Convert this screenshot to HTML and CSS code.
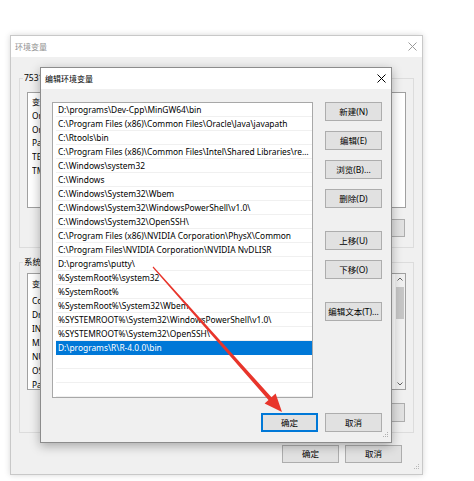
FILE: index.html
```html
<!DOCTYPE html>
<html>
<head>
<meta charset="utf-8">
<link rel="stylesheet" href="styles.css">
</head>
<body>
<div class="desk">
  <div class="win win-back">
    <div class="titlebar">
      <span class="title">环境变量</span>
      <svg class="close" viewBox="0 0 9 9"><path d="M0.5 0.5L8.5 8.5M8.5 0.5L0.5 8.5" stroke="#9a9a9a" stroke-width="1" fill="none"/></svg>
    </div>
    <div class="back-body">
      <fieldset class="group g1">
        <legend><span class="lclip">7531 的用户变量(U)</span></legend>
        <div class="vlist ulist">
          <div class="vtable">
            <div class="vhead"><span class="c1">变量</span></div>
            <div class="vrow"><span class="c1">OneDrive</span></div>
            <div class="vrow"><span class="c1">OneDriveConsumer</span></div>
            <div class="vrow"><span class="c1">Path</span></div>
            <div class="vrow"><span class="c1">TEMP</span></div>
            <div class="vrow"><span class="c1">TMP</span></div>
          </div>
        </div>
        <div class="btnrow">
          <button class="btn wide" aria-label="新建"></button>
          <button class="btn wide" aria-label="编辑"></button>
          <button class="btn wide" aria-label="删除"></button>
        </div>
      </fieldset>
      <fieldset class="group g2">
        <legend><span class="lclip">系统变量(S)</span></legend>
        <div class="vlist slist">
          <div class="vtable">
            <div class="vhead tall"><span class="c1">变量</span></div>
            <div class="vrow s"><span class="c1">ComSpec</span></div>
            <div class="vrow s"><span class="c1">DriverData</span></div>
            <div class="vrow s"><span class="c1">INTEL_DEV_REDIST</span></div>
            <div class="vrow s"><span class="c1">MIC_LD_LIBRARY_PATH</span></div>
            <div class="vrow s"><span class="c1">NUMBER_OF_PROCESSORS</span></div>
            <div class="vrow s"><span class="c1">OS</span></div>
            <div class="vrow s"><span class="c1">Path</span></div>
          </div>
          <div class="vscroll">
            <svg class="chev" viewBox="0 0 10 11"><path d="M2.5 6.5L5 4L7.5 6.5" stroke="#606060" stroke-width="1" fill="none"/></svg>
            <div class="thumb"></div>
            <div class="track"></div>
            <svg class="chev" viewBox="0 0 10 11"><path d="M2.5 4.5L5 7L7.5 4.5" stroke="#606060" stroke-width="1" fill="none"/></svg>
          </div>
        </div>
        <div class="btnrow tallrow">
          <button class="btn wide" aria-label="新建"></button>
          <button class="btn wide" aria-label="编辑"></button>
          <button class="btn wide" aria-label="删除"></button>
        </div>
      </fieldset>
      <div class="footer back-footer">
        <button class="btn b58">确定</button>
        <button class="btn b57">取消</button>
      </div>
    </div>
    <svg class="grip" viewBox="0 0 8 8"><g fill="#b8b8b8"><rect x="6" y="0" width="1" height="1"/><rect x="4" y="2" width="1" height="1"/><rect x="6" y="2" width="1" height="1"/><rect x="2" y="4" width="1" height="1"/><rect x="4" y="4" width="1" height="1"/><rect x="6" y="4" width="1" height="1"/></g></svg>
  </div>

  <div class="win win-front">
    <div class="titlebar">
      <span class="title">编辑环境变量</span>
      <svg class="close" viewBox="0 0 9 9"><path d="M0.5 0.5L8.5 8.5M8.5 0.5L0.5 8.5" stroke="#000" stroke-width="1" fill="none"/></svg>
    </div>
    <div class="front-body">
      <div class="front-main">
        <div class="pathlist">
          <div class="prow">D:\programs\Dev-Cpp\MinGW64\bin</div>
          <div class="prow">C:\Program Files (x86)\Common Files\Oracle\Java\javapath</div>
          <div class="prow">C:\Rtools\bin</div>
          <div class="prow">C:\Program Files (x86)\Common Files\Intel\Shared Libraries\red...</div>
          <div class="prow">C:\Windows\system32</div>
          <div class="prow">C:\Windows</div>
          <div class="prow">C:\Windows\System32\Wbem</div>
          <div class="prow">C:\Windows\System32\WindowsPowerShell\v1.0\</div>
          <div class="prow">C:\Windows\System32\OpenSSH\</div>
          <div class="prow">C:\Program Files (x86)\NVIDIA Corporation\PhysX\Common</div>
          <div class="prow">C:\Program Files\NVIDIA Corporation\NVIDIA NvDLISR</div>
          <div class="prow">D:\programs\putty\</div>
          <div class="prow">%SystemRoot%\system32</div>
          <div class="prow">%SystemRoot%</div>
          <div class="prow">%SystemRoot%\System32\Wbem</div>
          <div class="prow">%SYSTEMROOT%\System32\WindowsPowerShell\v1.0\</div>
          <div class="prow">%SYSTEMROOT%\System32\OpenSSH\</div>
          <div class="prow sel">D:\programs\R\R-4.0.0\bin</div>
          <div class="prow"></div>
          <div class="prow"></div>
          <div class="prow"></div>
        </div>
        <div class="btncol">
          <button class="btn">新建(N)</button>
          <button class="btn">编辑(E)</button>
          <button class="btn">浏览(B)...</button>
          <button class="btn">删除(D)</button>
          <button class="btn sep">上移(U)</button>
          <button class="btn">下移(O)</button>
          <button class="btn sep">编辑文本(T)...</button>
        </div>
      </div>
      <div class="footer front-footer">
        <button class="btn default">确定</button>
        <button class="btn">取消</button>
      </div>
    </div>
    <svg class="grip" viewBox="0 0 8 8"><g fill="#b0b0b0"><rect x="6" y="0" width="1" height="1"/><rect x="4" y="2" width="1" height="1"/><rect x="6" y="2" width="1" height="1"/><rect x="2" y="4" width="1" height="1"/><rect x="4" y="4" width="1" height="1"/><rect x="6" y="4" width="1" height="1"/></g></svg>
  </div>

  <svg class="arrow" viewBox="0 0 474 481">
    <polygon points="153.4,266.5 271.5,397.3 275.6,393.6 282,412 264.6,403.6 268.5,399.9 152.6,267.5" fill="#e8352b"/>
  </svg>
</div>
</body>
</html>
```

FILE: styles.css
```css
* { box-sizing: border-box; }
html, body { margin: 0; padding: 0; background: #ffffff; }
body {
  width: 474px;
  height: 481px;
  overflow: hidden;
  font-family: "Noto Sans", "Noto Sans CJK SC", sans-serif;
  color: #000;
}
.desk { position: relative; width: 474px; height: 481px; }

.win {
  position: absolute;
  display: flex;
  flex-direction: column;
  background: #f0f0f0;
}
.win-back {
  left: 10px;
  top: 35px;
  width: 413px;
  height: 440px;
  border: 1px solid #c8c8c8;
  box-shadow: 0 0 6px rgba(0, 0, 0, 0.16);
}
.win-front {
  left: 40px;
  top: 67px;
  width: 352px;
  border: 1px solid #8c8c8c;
  box-shadow: 0 3px 10px rgba(0, 0, 0, 0.3);
}

.titlebar {
  flex: none;
  height: 21px;
  background: #ffffff;
  display: flex;
  align-items: center;
  justify-content: space-between;
  padding: 0 5px 0 4px;
}
.title {
  font-family: "Noto Sans CJK SC", sans-serif;
  font-size: 8px;
  line-height: 10px;
  color: #000;
}
.win-back .title { color: #8f8f8f; }
.close { width: 9px; height: 9px; display: block; }

.grip { position: absolute; right: 2px; bottom: 2px; width: 8px; height: 8px; }

/* background dialog */
.back-body {
  flex: 1;
  display: flex;
  flex-direction: column;
  padding: 0 8px;
}
.group {
  margin: 0;
  border: 1px solid #dcdcdc;
  min-width: 0;
  padding: 7px 7px 10px 7px;
}
.g1 { margin-top: 14px; }
.g2 { margin-top: 7px; padding-top: 4px; }
.group legend {
  font-family: "Noto Sans", "Noto Sans CJK SC", sans-serif;
  font-size: 8.5px;
  line-height: 14px;
  padding: 0 1px;
  margin-left: -4px;
  color: #000;
}
.lclip {
  display: block;
  width: 17px;
  overflow: hidden;
  white-space: nowrap;
}
.vlist {
  background: #fff;
  border: 1px solid #a0a0a0;
  display: flex;
  overflow: hidden;
}
.ulist { height: 116px; }
.slist { height: 117px; }
.vtable { flex: 1; min-width: 0; }
.vhead, .vrow {
  display: flex;
  white-space: nowrap;
  font-size: 8.4px;
  padding-left: 4px;
  align-items: center;
}
.vhead { height: 16px; font-family: "Noto Sans CJK SC", sans-serif; font-size: 8px; }
.vhead.tall { height: 19px; }
.vrow { height: 13.6px; }
.vrow.s { height: 14px; }
.c1 { width: 18px; flex: none; overflow: hidden; }

.vscroll {
  width: 10px;
  flex: none;
  background: #f0f0f0;
  display: flex;
  flex-direction: column;
  align-items: center;
}
.chev { width: 10px; height: 11px; display: block; flex: none; }
.thumb { width: 8px; height: 32px; background: #c6c6c6; margin-top: 2px; flex: none; }
.track { flex: 1; }

.btnrow {
  display: flex;
  justify-content: flex-end;
  gap: 6px;
  margin-top: 11px;
  padding-right: 1px;
}
.btnrow .btn { height: 18px; }
.btnrow.tallrow { margin-top: 13px; }
.btnrow.tallrow .btn { height: 19px; }
.btn.wide { width: 75px; }

.footer {
  display: flex;
  justify-content: flex-end;
}
.back-footer {
  margin-top: 12px;
  gap: 6px;
  padding-right: 12px;
}
.back-footer .btn { height: 18px; }
.b58 { width: 58px; }
.b57 { width: 57px; }

/* buttons */
.btn {
  font-family: "Noto Sans", "Noto Sans CJK SC", sans-serif;
  font-size: 8.5px;
  line-height: 10px;
  height: 19px;
  width: 57px;
  padding: 0;
  margin: 0;
  background: #e1e1e1;
  border: 1px solid #adadad;
  color: #000;
  display: flex;
  align-items: center;
  justify-content: center;
  white-space: nowrap;
}
.btn.default { border: 2px solid #0078d7; }

/* front dialog */
.front-body {
  flex: 1;
  display: flex;
  flex-direction: column;
  padding: 13px 9px 10px 11px;
}
.front-main {
  display: flex;
  gap: 12px;
}
.pathlist {
  width: 261px;
  height: 296px;
  flex: none;
  background: #fff;
  border: 1px solid #a8a8a8;
  overflow: hidden;
}
.prow {
  height: 14px;
  margin-left: 3px;
  padding-left: 2px;
  border-bottom: 1px solid #f0f0f0;
  font-size: 8.4px;
  line-height: 13px;
  white-space: nowrap;
  overflow: hidden;
  text-overflow: ellipsis;
  color: #000;
}
.prow.sel {
  background: #0078d7;
  color: #fff;
  border-bottom-color: #0078d7;
}
.btncol {
  display: flex;
  flex-direction: column;
  gap: 10px;
  width: 57px;
}
.btncol .sep { margin-top: 13px; }
.front-footer {
  margin-top: 15px;
  gap: 7px;
}

.arrow {
  position: absolute;
  left: 0;
  top: 0;
  width: 474px;
  height: 481px;
  pointer-events: none;
}
```
